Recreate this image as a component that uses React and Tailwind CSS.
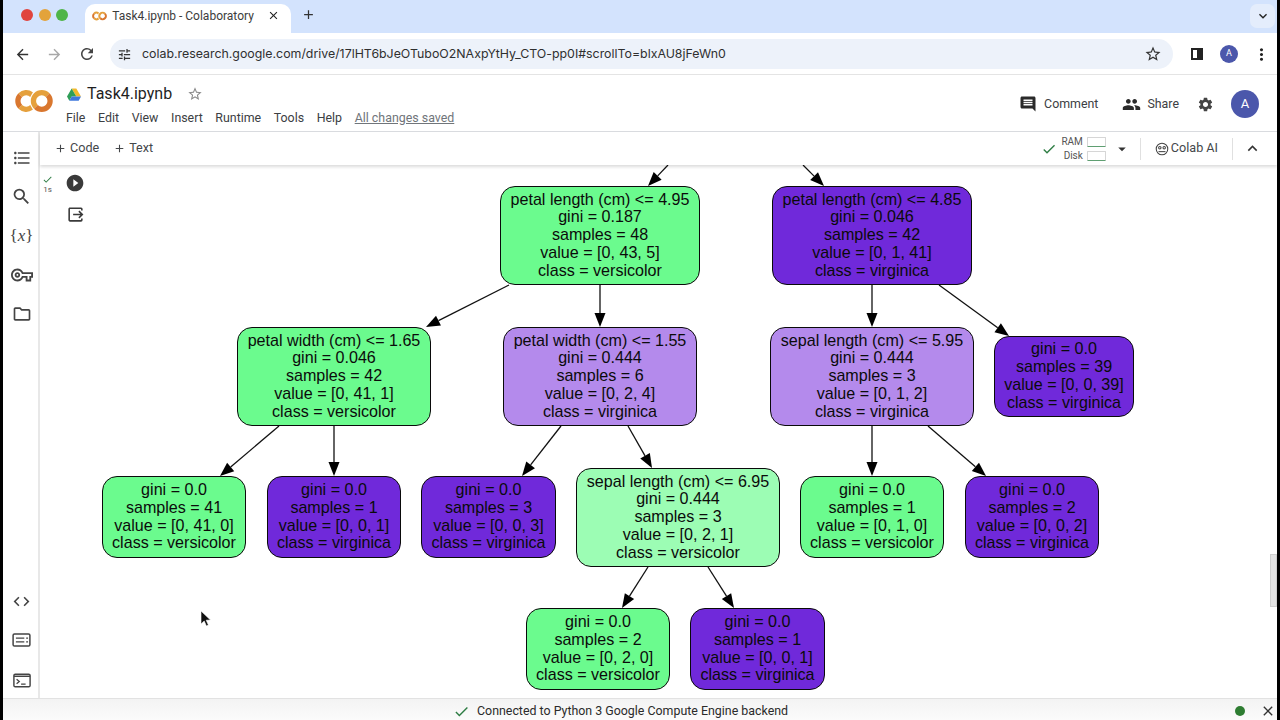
import React from 'react';
import {
  MdArrowBack, MdArrowForward, MdRefresh, MdOutlineStarBorder, MdMoreVert, MdKeyboardArrowDown,
  MdKeyboardArrowUp, MdAdd, MdClose, MdCheck, MdFormatListBulleted, MdSearch, MdOutlineVpnKey,
  MdOutlineFolder, MdCode, MdComment, MdPeople, MdSettings, MdPlayCircleFilled, MdOutlineOutput,
  MdOutlineTune, MdArrowDropDown,
} from 'react-icons/md';

const GREEN = 'bg-[#6bfb8e]';
const PURPLE = 'bg-[#7029da]';
const LILAC = 'bg-[#b48aec]';
const MINT = 'bg-[#9cfdb4]';

// page coordinates of the tree, taken from the picture
const nodes = [
  { x: 500, y: 186, w: 200, h: 99, c: GREEN, t: ['petal length (cm) <= 4.95', 'gini = 0.187', 'samples = 48', 'value = [0, 43, 5]', 'class = versicolor'] },
  { x: 772, y: 186, w: 200, h: 99, c: PURPLE, t: ['petal length (cm) <= 4.85', 'gini = 0.046', 'samples = 42', 'value = [0, 1, 41]', 'class = virginica'] },
  { x: 237, y: 327, w: 194, h: 99, c: GREEN, t: ['petal width (cm) <= 1.65', 'gini = 0.046', 'samples = 42', 'value = [0, 41, 1]', 'class = versicolor'] },
  { x: 503, y: 327, w: 194, h: 99, c: LILAC, t: ['petal width (cm) <= 1.55', 'gini = 0.444', 'samples = 6', 'value = [0, 2, 4]', 'class = virginica'] },
  { x: 770, y: 327, w: 204, h: 99, c: LILAC, t: ['sepal length (cm) <= 5.95', 'gini = 0.444', 'samples = 3', 'value = [0, 1, 2]', 'class = virginica'] },
  { x: 994, y: 336, w: 140, h: 81, c: PURPLE, t: ['gini = 0.0', 'samples = 39', 'value = [0, 0, 39]', 'class = virginica'] },
  { x: 102, y: 476, w: 144, h: 82, c: GREEN, t: ['gini = 0.0', 'samples = 41', 'value = [0, 41, 0]', 'class = versicolor'] },
  { x: 267, y: 476, w: 134, h: 82, c: PURPLE, t: ['gini = 0.0', 'samples = 1', 'value = [0, 0, 1]', 'class = virginica'] },
  { x: 421, y: 476, w: 135, h: 82, c: PURPLE, t: ['gini = 0.0', 'samples = 3', 'value = [0, 0, 3]', 'class = virginica'] },
  { x: 576, y: 468, w: 204, h: 99, c: MINT, t: ['sepal length (cm) <= 6.95', 'gini = 0.444', 'samples = 3', 'value = [0, 2, 1]', 'class = versicolor'] },
  { x: 800, y: 476, w: 144, h: 82, c: GREEN, t: ['gini = 0.0', 'samples = 1', 'value = [0, 1, 0]', 'class = versicolor'] },
  { x: 965, y: 476, w: 134, h: 82, c: PURPLE, t: ['gini = 0.0', 'samples = 2', 'value = [0, 0, 2]', 'class = virginica'] },
  { x: 526, y: 608, w: 144, h: 82, c: GREEN, t: ['gini = 0.0', 'samples = 2', 'value = [0, 2, 0]', 'class = versicolor'] },
  { x: 690, y: 608, w: 135, h: 82, c: PURPLE, t: ['gini = 0.0', 'samples = 1', 'value = [0, 0, 1]', 'class = virginica'] },
];

const edges = [
  [668, 165, 648, 186], [803, 165, 824, 186], [509, 285, 426, 327], [600, 285, 600, 327],
  [872, 285, 872, 327], [939, 285, 1009, 336], [279, 426, 220, 476], [334, 426, 334, 476],
  [561, 426, 522, 476], [628, 426, 652, 468], [872, 426, 872, 476], [928, 426, 986, 476],
  [648, 567, 622, 608], [708, 567, 734, 608],
];

// canvas origin on the page
const OX = 40;
const OY = 165;

const Arrow = ({ e }) => {
  const [x1, y1, x2, y2] = e;
  const len = Math.hypot(x2 - x1, y2 - y1);
  const ux = (x2 - x1) / len;
  const uy = (y2 - y1) / len;
  const bx = x2 - ux * 14;
  const by = y2 - uy * 14;
  const pts = `${x2},${y2} ${bx - uy * 5.5},${by + ux * 5.5} ${bx + uy * 5.5},${by - ux * 5.5}`;
  return (
    <g>
      <line x1={x1} y1={y1} x2={bx} y2={by} stroke="#111" strokeWidth="1.3" />
      <polygon points={pts} fill="#000" />
    </g>
  );
};

const TreeNode = ({ n }) => (
  <div
    className={`absolute flex flex-col items-center justify-center rounded-[15px] border-[1.5px] border-[#0a0a0a] pb-[1px] font-['Liberation_Sans',Arial,sans-serif] text-[16.1px] leading-[17.8px] text-[#0b0b0b] whitespace-nowrap ${n.c}`}
    style={{ left: n.x - OX, top: n.y - OY, width: n.w, height: n.h }}
  >
    {n.t.map((line, i) => <div key={i}>{line}</div>)}
  </div>
);

const ColabLogo = ({ className }) => (
  <svg viewBox="0 0 24 24" className={className}>
    <path d="M4.54,9.46,2.19,7.1a6.93,6.93,0,0,0,0,9.79l2.35-2.36A3.59,3.59,0,0,1,4.54,9.46Z" fill="#d9772f" />
    <path d="M2.19,7.1,4.54,9.46a3.59,3.59,0,0,1,5.08,0l1.71-2.93h0l-.1-.08h0A6.93,6.93,0,0,0,2.19,7.1Z" fill="#e5a03c" />
    <path d="M11.34,17.46h0L9.62,14.54a3.59,3.59,0,0,1-5.08,0L2.19,16.9a6.93,6.93,0,0,0,9,.65l.11-.09" fill="#e5a03c" />
    <path d="M12,7.1a6.93,6.93,0,0,0,0,9.79l2.36-2.36a3.59,3.59,0,1,1,5.08-5.08L21.81,7.1A6.91,6.91,0,0,0,12,7.1Z" fill="#e5a03c" />
    <path d="M21.81,7.1,19.46,9.46a3.59,3.59,0,0,1-5.08,5.08L12,16.9A6.93,6.93,0,0,0,21.81,7.1Z" fill="#d9772f" />
  </svg>
);

const DriveLogo = () => (
  <svg viewBox="0 0 24 21" className="ml-[1px] h-[13px] w-[14px]">
    <path d="M8 0h8l8 14h-8z" fill="#f2b92c" />
    <path d="M8 0l8 14H8l-4 7-4-7z" fill="#2f9e57" />
    <path d="M4 21l4-7h16l-4 7z" fill="#3f78dc" />
  </svg>
);

const ShortcutIcon = () => (
  <svg viewBox="0 0 20 15" className="h-[14px] w-[19px]" fill="none">
    <rect x="1" y="1" width="18" height="13" rx="1.5" stroke="#444" strokeWidth="1.6" />
    <path d="M4 5.5h9M4 9.5h9M15 5.5h2M15 9.5h2" stroke="#444" strokeWidth="1.5" />
  </svg>
);

const TerminalIcon = () => (
  <svg viewBox="0 0 20 16" className="h-[15px] w-[18px]" fill="none">
    <rect x="1" y="1" width="18" height="14" rx="1.5" stroke="#444" strokeWidth="1.6" />
    <path d="M1 2.5h18v1.6H1z" fill="#444" />
    <path d="M4 6.5l3 2.5-3 2.5M9 12h5" stroke="#444" strokeWidth="1.4" />
  </svg>
);

const Meter = () => <div className="h-[10px] w-[19px] rounded-[1px] border border-[#d6d6d6] border-b-[#5f9f72]" />;

const MENU = ['File', 'Edit', 'View', 'Insert', 'Runtime', 'Tools', 'Help'];

export default function App() {
  return (
    <div className="h-[720px] w-[1280px] overflow-hidden bg-black px-[3px] font-['Roboto',Arial,sans-serif] text-[#3c4043]">
      <div className="flex h-full flex-col bg-white">
        {/* Tab strip */}
        <div className="flex h-[33px] shrink-0 items-end bg-[#d3e3fd]">
          <div className="flex h-[30px] items-center gap-[5.6px] self-start pl-[18px]">
            <span className="h-[12px] w-[12px] rounded-full bg-[#e0443e]" />
            <span className="h-[12px] w-[12px] rounded-full bg-[#e3a33b]" />
            <span className="h-[12px] w-[12px] rounded-full bg-[#4fb548]" />
          </div>
          <div className="ml-[17px] flex h-[29px] w-[206px] items-center rounded-t-[10px] bg-white pb-[6px] pl-[7px] pr-[11px]">
            <ColabLogo className="h-[16px] w-[15px]" />
            <span className="ml-[5px] whitespace-nowrap text-[12px] text-[#3c3c3c]">Task4.ipynb - Colaboratory</span>
            <MdClose className="ml-auto text-[13px] text-[#222]" />
          </div>
          <MdAdd className="mb-[11px] ml-[10px] text-[15px] text-[#333]" />
          <div className="mb-[5px] ml-auto mr-[2px] flex h-[24px] w-[25px] items-center justify-center rounded-[7px] bg-[#e4edfc]">
            <MdKeyboardArrowDown className="text-[16px] text-[#222]" />
          </div>
        </div>

        {/* Address bar */}
        <div className="flex h-[42px] shrink-0 items-center border-b border-[#e4e4e4] pl-[11px] pt-[1px]">
          <MdArrowBack className="text-[17px] text-[#333]" />
          <MdArrowForward className="ml-[15px] text-[17px] text-[#a8a8a8]" />
          <MdRefresh className="ml-[15px] text-[18px] text-[#444]" />
          <div className="ml-[14px] flex h-[30px] w-[1063px] items-center rounded-full bg-[#edf2fa] pl-[6.5px]">
            <MdOutlineTune className="text-[15px] text-[#333]" />
            <span className="ml-[10.5px] font-['Inter',sans-serif] text-[12.36px] text-[#2f2f2f]">colab.research.google.com/drive/17lHT6bJeOTuboO2NAxpYtHy_CTO-pp0I#scrollTo=blxAU8jFeWn0</span>
            <MdOutlineStarBorder className="ml-auto mr-[11px] text-[18px] text-[#333]" />
          </div>
          <div className="ml-[18px] h-[12px] w-[12px] border-2 border-[#222] bg-[linear-gradient(90deg,#fff_50%,#222_50%)]" />
          <div className="ml-[17px] flex h-[18px] w-[18px] items-center justify-center rounded-full bg-[#4b57ab] text-[9px] text-white">A</div>
          <MdMoreVert className="ml-[13.5px] text-[19px] text-[#222]" />
        </div>

        {/* Notebook header */}
        <div className="flex h-[57px] shrink-0 border-b border-[#dadce0]">
          <ColabLogo className="ml-[12px] mt-[7px] h-[38px] w-[38px]" />
          <div className="ml-[13px] flex flex-col">
            <div className="mt-[8px] flex items-center">
              <DriveLogo />
              <span className="ml-[6px] text-[16px] leading-[22px] text-[#1f1f1f]">Task4.ipynb</span>
              <MdOutlineStarBorder className="ml-[15px] text-[16px] text-[#8a8a8a]" />
            </div>
            <div className="mt-[4px] flex items-center text-[12.4px] leading-[18px] text-[#3c4043]">
              {MENU.map(m => <span key={m} className="mr-[12.6px]">{m}</span>)}
              <span className="underline text-[#70757a]">All changes saved</span>
            </div>
          </div>
          <div className="ml-auto mr-[18px] mt-[14px] flex h-[30px] items-center text-[12.4px] text-[#3c4043]">
            <MdComment className="text-[18px] text-[#2a2a2a]" />
            <span className="ml-[7px]">Comment</span>
            <MdPeople className="ml-[24px] text-[19px] text-[#2a2a2a]" />
            <span className="ml-[6px]">Share</span>
            <MdSettings className="ml-[18px] text-[17px] text-[#444]" />
            <div className="ml-[17px] flex h-[28px] w-[28px] items-center justify-center rounded-full bg-[#4b57ab] text-[13px] text-white">A</div>
          </div>
        </div>

        <div className="flex min-h-0 flex-1">
          {/* Side rail */}
          <div className="flex w-[37px] shrink-0 flex-col items-center border-r-2 border-[#e8e8e8] pl-[2px] text-[#444]">
            <MdFormatListBulleted className="mt-[16px] text-[20px]" />
            <MdSearch className="mt-[18px] text-[21px]" />
            <span className="mt-[19px] h-[20px] whitespace-nowrap font-['Liberation_Serif',serif] text-[17px] leading-[20px]">{'{'}<i>x</i>{'}'}</span>
            <MdOutlineVpnKey className="mt-[18px] text-[22px]" />
            <MdOutlineFolder className="mt-[18px] text-[20px]" />
            <MdCode className="mt-auto text-[19px]" />
            <div className="mt-[22.5px] flex"><ShortcutIcon /></div>
            <div className="mb-[10.5px] mt-[25.5px] flex"><TerminalIcon /></div>
          </div>

          <div className="flex min-w-0 flex-1 flex-col">
            {/* Cell toolbar */}
            <div className="z-10 flex h-[33px] shrink-0 items-center bg-white pl-[14px] text-[12.6px] text-[#44474a] shadow-[0_2px_3px_rgba(0,0,0,0.14)]">
              <MdAdd className="text-[13px]" />
              <span className="ml-[3px]">Code</span>
              <MdAdd className="ml-[14px] text-[13px]" />
              <span className="ml-[3px]">Text</span>
              <div className="ml-auto flex items-center pr-[15px]">
                <MdCheck className="text-[16px] text-[#2e7d44]" />
                <div className="ml-[4px] flex flex-col items-end text-[10px] leading-[14px] text-[#555]">
                  <span>RAM</span>
                  <span>Disk</span>
                </div>
                <div className="ml-[4px] flex flex-col gap-[4px]"><Meter /><Meter /></div>
                <MdArrowDropDown className="ml-[7px] text-[18px] text-[#333]" />
                <div className="ml-[9px] h-[22px] w-[1px] bg-[#e0e0e0]" />
                <svg viewBox="0 0 16 16" className="ml-[14px] h-[14px] w-[14px]" fill="none" stroke="#444" strokeWidth="1.2">
                  <circle cx="8" cy="8" r="6.6" />
                  <circle cx="5.5" cy="6.5" r="1.4" />
                  <circle cx="10.5" cy="6.5" r="1.4" />
                  <path d="M4 11h8" />
                </svg>
                <span className="ml-[2px]">Colab AI</span>
                <div className="ml-[14px] h-[22px] w-[1px] bg-[#e0e0e0]" />
                <MdKeyboardArrowUp className="ml-[10px] text-[19px] text-[#333]" />
              </div>
            </div>

            {/* Cell output canvas */}
            <div className="relative min-h-0 flex-1 overflow-hidden bg-white">
              <svg width="1237" height="535" viewBox={`${OX} ${OY} 1237 535`} className="absolute left-0 top-0">
                {edges.map((e, i) => <Arrow key={i} e={e} />)}
              </svg>
              {nodes.map((n, i) => <TreeNode key={i} n={n} />)}

              <div className="absolute left-[2px] top-[9px] flex flex-col items-center">
                <MdCheck className="text-[11px] text-[#2e7d44]" />
                <span className="text-[8px] leading-[9px] text-[#555]">1s</span>
              </div>
              <MdPlayCircleFilled className="absolute left-[25px] top-[8px] text-[20px] text-[#3a3a3a]" />
              <MdOutlineOutput className="absolute left-[26px] top-[40px] text-[19px] text-[#3a3a3a]" />

              <div className="absolute right-0 top-[389px] h-[53px] w-[7px] border border-[#d0d0d0] bg-[#e4e4e4]" />

              {/* mouse pointer */}
              <svg viewBox="0 0 12 18" className="absolute left-[160px] top-[445px] h-[18px] w-[12px]">
                <path d="M1 1l0 13 3.2-3 2.2 5 2-1-2.2-4.8 4.3-.2z" fill="#111" stroke="#fff" strokeWidth="0.6" />
              </svg>
            </div>
          </div>
        </div>

        {/* Status bar */}
        <div className="flex h-[22px] shrink-0 items-center border-t border-[#e2e2e2] bg-[linear-gradient(180deg,#f3f3f3,#fbfbfb)] pt-[3px] text-[12.4px] text-[#2b2b2b]">
          <MdCheck className="ml-[450px] text-[17px] text-[#2e7d44]" />
          <span className="ml-[7px]">Connected to Python 3 Google Compute Engine backend</span>
          <span className="ml-auto h-[10px] w-[10px] rounded-full bg-[#2e7d32]" />
          <MdClose className="ml-[15px] mr-[1px] text-[16px] text-[#333]" />
        </div>
      </div>
    </div>
  );
}
